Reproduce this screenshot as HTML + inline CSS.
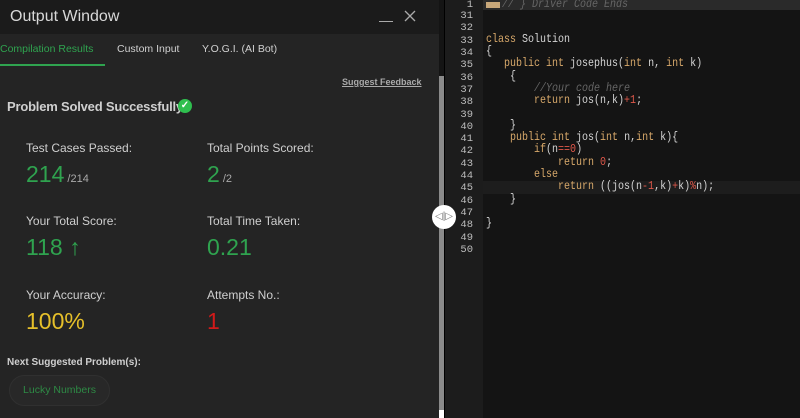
<!DOCTYPE html>
<html><head><style>
*{margin:0;padding:0;box-sizing:border-box}
body{width:800px;height:418px;overflow:hidden;background:#141414;font-family:"Liberation Sans",sans-serif;position:relative}
#left{position:absolute;left:0;top:0;width:439px;height:418px;background:#242424}
#hdr{position:absolute;left:0;top:0;width:439px;height:34px;background:#1b1b1b}
.t{position:absolute;white-space:nowrap}
#sb{position:absolute;left:439px;top:76px;width:5px;height:334px;background:#8a8a8a}
#sb2{position:absolute;left:439px;top:410px;width:5px;height:8px;background:#fff}
#dv{position:absolute;left:444px;top:0;width:1px;height:418px;background:#000}
#gut{position:absolute;left:445px;top:0;width:38px;height:418px;background:#1c1c1c}
.ln{position:absolute;left:445px;width:28px;text-align:right;font:10.5px "Liberation Mono",monospace;color:#bdbdbd}
.cd{position:absolute;left:486px;font:10px "Liberation Mono",monospace;color:#d4d4d4;white-space:pre;transform:scaleY(1.15);transform-origin:left top}
.k{color:#d7a86a}.c{color:#666;font-style:italic}.n{color:#e0584a}
.lbl{font-size:12px;color:#cfcfcf}
.big{font-size:23px;color:#2fa34f}
</style></head><body>
<div id="left">
<div id="hdr"></div>
<div class="t" style="left:10px;top:8px;font-size:16px;color:#d8d8d8">Output Window</div>
<div class="t" style="left:379px;top:21px;width:14px;height:1px;background:#aaa"></div>
<svg class="t" style="left:404px;top:10px" width="12" height="12"><path d="M1 1L11 11M11 1L1 11" stroke="#aaa" stroke-width="1.3"/></svg>
<div class="t" style="left:0;top:43px;font-size:10.5px;color:#2fa34f">Compilation Results</div>
<div class="t" style="left:0;top:64px;width:105px;height:2px;background:#2fa34f"></div>
<div class="t" style="left:117px;top:43px;font-size:10.5px;color:#d0d0d0">Custom Input</div>
<div class="t" style="left:202px;top:43px;font-size:10.5px;color:#d0d0d0">Y.O.G.I. (AI Bot)</div>
<div class="t" style="left:342px;top:77px;font-size:9px;color:#aaa;text-decoration:underline;font-weight:bold">Suggest Feedback</div>
<div class="t" style="left:7px;top:99px;font-size:13px;font-weight:bold;color:#cfcfcf;letter-spacing:-0.2px">Problem Solved Successfully</div>
<div class="t" style="left:178px;top:99px;width:14px;height:14px;border-radius:50%;background:#2fbf4f;color:#fff;font-size:10px;line-height:14px;text-align:center;font-weight:bold">✓</div>
<div class="t lbl" style="left:26px;top:141px">Test Cases Passed:</div>
<div class="t big" style="left:26px;top:161px">214<span style="font-size:11px;color:#aaa"> /214</span></div>
<div class="t lbl" style="left:207px;top:141px">Total Points Scored:</div>
<div class="t big" style="left:207px;top:161px">2<span style="font-size:11px;color:#aaa"> /2</span></div>
<div class="t lbl" style="left:26px;top:214px">Your Total Score:</div>
<div class="t big" style="left:26px;top:234px">118 <span style="font-weight:bold">↑</span></div>
<div class="t lbl" style="left:207px;top:214px">Total Time Taken:</div>
<div class="t big" style="left:207px;top:234px">0.21</div>
<div class="t lbl" style="left:26px;top:288px">Your Accuracy:</div>
<div class="t big" style="left:26px;top:308px;color:#e6c02a">100%</div>
<div class="t lbl" style="left:207px;top:288px">Attempts No.:</div>
<div class="t big" style="left:207px;top:308px;color:#d11a1a">1</div>
<div class="t" style="left:7px;top:357px;font-size:10px;font-weight:bold;color:#cfcfcf">Next Suggested Problem(s):</div>
<div class="t" style="left:9px;top:375px;width:101px;height:31px;border-radius:16px;background:#282828;border:1px solid #303030;color:#2e8a45;font-size:10.5px;line-height:29px;text-align:center">Lucky Numbers</div>
</div>
<div id="sb"></div><div id="sb2"></div><div id="dv"></div>
<div id="gut"></div>
<div class="t" style="left:483px;top:0;width:317px;height:10px;background:#2a2a2a"></div>
<div class="t" style="left:486px;top:2px;width:14px;height:6px;background:#c7a77a"></div>
<div class="t" style="left:483px;top:181px;width:317px;height:13px;background:#1d1d1d"></div>
<div class="t" style="left:432px;top:205px;width:24px;height:24px;border-radius:50%;background:#fff;color:#777;font-size:10px;line-height:24px;text-align:center">◁|▷</div>
<div class="ln" style="top:-1px">1</div>
<div class="cd c" style="top:-1px;left:502px">// } Driver Code Ends</div>
<div class="ln" style="top:10px">31</div>
<div class="ln" style="top:22px">32</div>
<div class="ln" style="top:35px">33</div><div class="cd" style="top:34px"><span class="k">class</span> Solution</div>
<div class="ln" style="top:47px">34</div><div class="cd" style="top:46px">{</div>
<div class="ln" style="top:59px">35</div><div class="cd" style="top:58px">   <span class="k">public int</span> josephus(<span class="k">int</span> n, <span class="k">int</span> k)</div>
<div class="ln" style="top:72px">36</div><div class="cd" style="top:71px">    {</div>
<div class="ln" style="top:84px">37</div><div class="cd c" style="top:83px">        //Your code here</div>
<div class="ln" style="top:96px">38</div><div class="cd" style="top:95px">        <span class="k">return</span> jos(n,k)<span class="n">+1</span>;</div>
<div class="ln" style="top:109px">39</div>
<div class="ln" style="top:121px">40</div><div class="cd" style="top:120px">    }</div>
<div class="ln" style="top:133px">41</div><div class="cd" style="top:132px">    <span class="k">public int</span> jos(<span class="k">int</span> n,<span class="k">int</span> k){</div>
<div class="ln" style="top:145px">42</div><div class="cd" style="top:144px">        <span class="k">if</span>(n<span class="n">==0</span>)</div>
<div class="ln" style="top:158px">43</div><div class="cd" style="top:157px">            <span class="k">return</span> <span class="n">0</span>;</div>
<div class="ln" style="top:170px">44</div><div class="cd" style="top:169px">        <span class="k">else</span></div>
<div class="ln" style="top:182px">45</div><div class="cd" style="top:181px">            <span class="k">return</span> ((jos(n<span class="n">-1</span>,k)<span class="n">+</span>k)<span class="n">%</span>n);</div>
<div class="ln" style="top:195px">46</div><div class="cd" style="top:194px">    }</div>
<div class="ln" style="top:207px">47</div>
<div class="ln" style="top:219px">48</div><div class="cd" style="top:218px">}</div>
<div class="ln" style="top:232px">49</div>
<div class="ln" style="top:244px">50</div>
</body></html>
